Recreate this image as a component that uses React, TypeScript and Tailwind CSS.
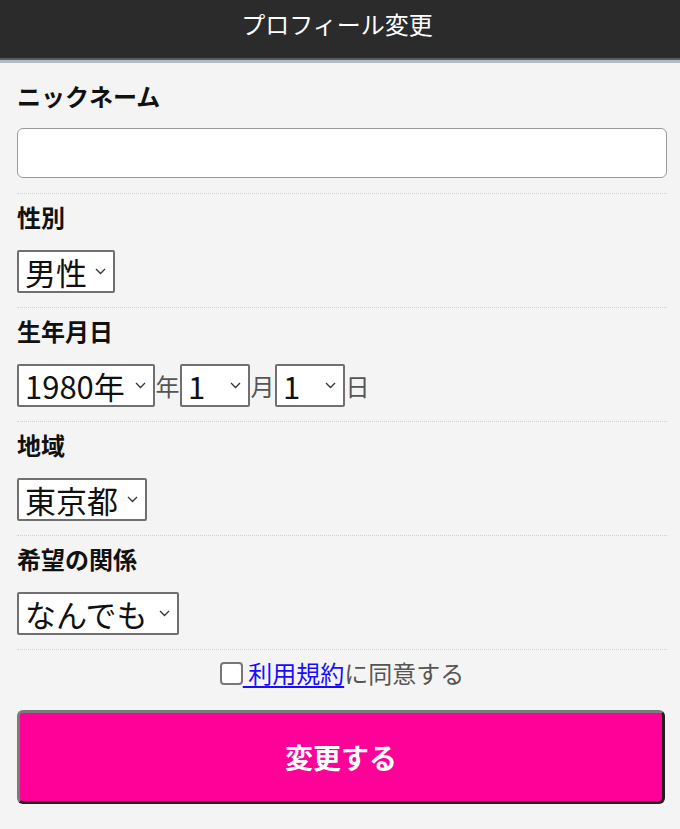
import React from "react";

function Chevron() {
  return (
    <svg width="11" height="7" viewBox="0 0 11 7" className="shrink-0">
      <path d="M1 1 L5.5 5.5 L10 1" fill="none" stroke="#333" strokeWidth="1.3" />
    </svg>
  );
}

function FakeSelect({ value, width }: { value: string; width: string }) {
  return (
    <div
      className={`${width} h-[43px] flex items-center justify-between bg-white border-2 border-[#707070] rounded-[2px] pl-[6px] pr-[7px] text-[31px] leading-none text-[#111]`}
    >
      <span className="whitespace-nowrap">{value}</span>
      <Chevron />
    </div>
  );
}

function Section({ label, children }: { label: string; children: React.ReactNode }) {
  return (
    <div className="border-t border-dotted border-[#cfcfcf] pt-[8px] pb-[14px]">
      <div className="text-[24px] leading-[30px] font-bold text-[#111]">{label}</div>
      <div className="mt-[18px] flex items-center">{children}</div>
    </div>
  );
}

export default function App() {
  return (
    <div
      className="w-[680px] min-h-[829px] bg-[#f4f4f4]"
      style={{ fontFamily: '"Noto Sans CJK JP", "Noto Sans", sans-serif' }}
    >
      <div className="h-[58px] bg-[#2b2b2b] flex items-center justify-center">
        <span className="text-white text-[24px] leading-none -mt-[10px] -ml-[6px]">プロフィール変更</span>
      </div>
      <div className="h-[2px] bg-[#5a5d60]" />
      <div className="h-[3px] bg-[#b3bbc5]" />

      <div className="pl-[17px] pr-[13px]">
        <div className="pt-[18px] pb-[15px]">
          <div className="text-[24px] leading-[30px] font-bold text-[#111]">ニックネーム</div>
          <div className="mt-[17px] h-[50px] bg-white border border-[#9a9a9a] rounded-[6px]" />
        </div>

        <Section label="性別">
          <FakeSelect value="男性" width="w-[98px]" />
        </Section>

        <Section label="生年月日">
          <FakeSelect value="1980年" width="w-[138px]" />
          <span className="text-[24px] leading-none text-[#555] w-[25px] text-center">年</span>
          <FakeSelect value="1" width="w-[70px]" />
          <span className="text-[24px] leading-none text-[#555] w-[25px] text-center">月</span>
          <FakeSelect value="1" width="w-[70px]" />
          <span className="text-[24px] leading-none text-[#555] w-[25px] text-center">日</span>
        </Section>

        <Section label="地域">
          <FakeSelect value="東京都" width="w-[130px]" />
        </Section>

        <Section label="希望の関係">
          <FakeSelect value="なんでも" width="w-[162px]" />
        </Section>

        <div className="border-t border-dotted border-[#cfcfcf] pt-[8px]">
          <div className="flex items-center justify-center h-[30px] text-[24px] leading-none">
            <span className="inline-block w-[23px] h-[23px] bg-white border-2 border-[#777] rounded-[4px]" />
            <a className="text-[#1a0dff] underline underline-offset-[3px] whitespace-pre" href="#"> 利用規約</a>
            <span className="text-[#555]">に同意する</span>
          </div>
        </div>

        <div className="mt-[22px] pr-[2px]">
          <div className="h-[94px] bg-[#ff0099] rounded-[6px] border-[3px] border-t-[#7a7a7a] border-l-[#7a7a7a] border-b-[#1e1e1e] border-r-[#1e1e1e] flex items-center justify-center">
            <span className="text-white font-bold text-[28px] leading-none">変更する</span>
          </div>
        </div>
      </div>
    </div>
  );
}
